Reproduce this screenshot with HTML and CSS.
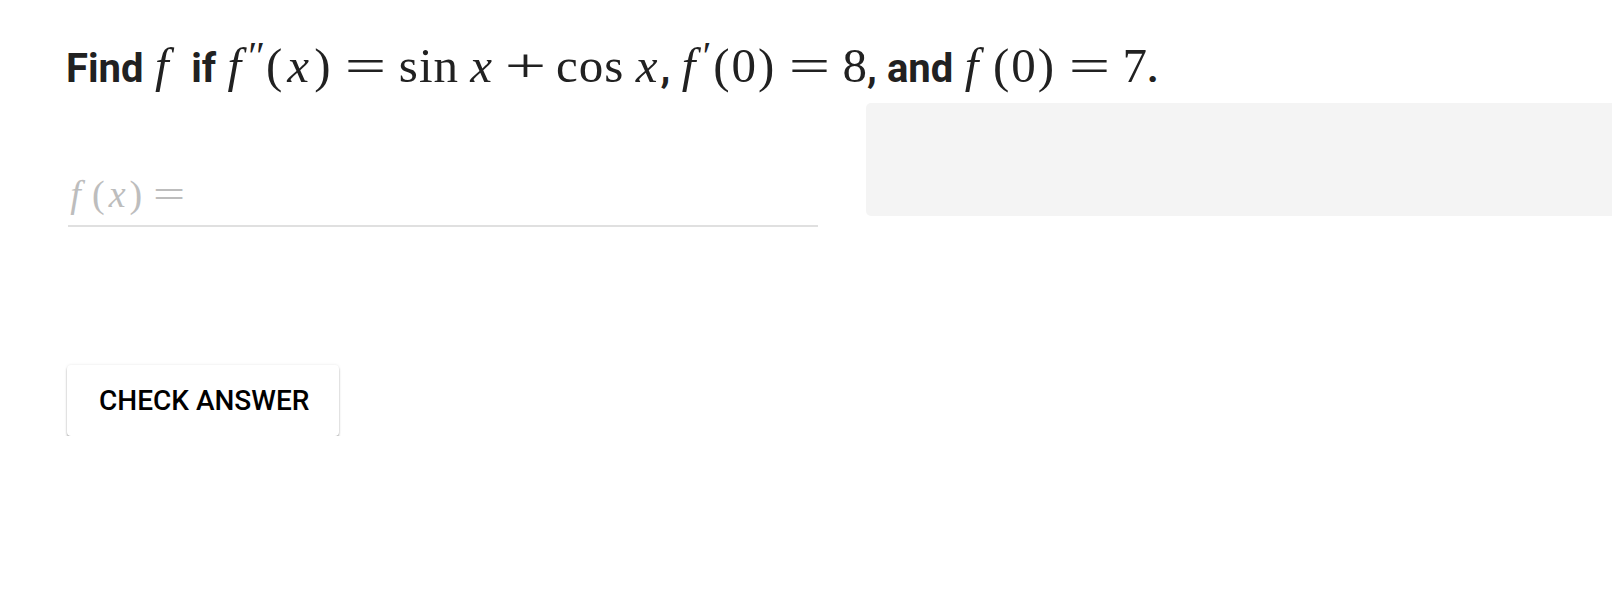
FILE: index.html
```html
<!DOCTYPE html>
<html lang="en">
<head>
<meta charset="utf-8">
<title>Question</title>
<link rel="stylesheet" href="styles.css">
</head>
<body>
<div class="page">
  <p class="question">Find <span class="m"><i class="v f">f</i></span> if <span class="m"><i class="v f">f</i><span class="pr pr2">′′</span><span class="p">(</span><i class="v x">x</i><span class="p">)</span><span class="op rel">=</span><span class="fn">sin</span><span class="th"></span><i class="v x">x</i><span class="op bin">+</span><span class="fn">cos</span><span class="th"></span><i class="v x">x</i></span>, <span class="m"><i class="v f">f</i><span class="pr">′</span><span class="p">(</span>0<span class="p">)</span><span class="op rel">=</span>8</span>, and <span class="m"><i class="v f">f</i><span class="p">(</span>0<span class="p">)</span><span class="op rel">=</span>7</span>.</p>
  <div class="row">
    <div class="answer">
      <div class="field"><span class="ph m"><i class="v f">f</i><span class="p">(</span><i class="v x">x</i><span class="p">)</span><span class="op rel">=</span></span></div>
    </div>
    <div class="preview"></div>
  </div>
  <button class="check" type="button">CHECK ANSWER</button>
</div>
</body>
</html>
```
FILE: styles.css
```css
html, body {
  margin: 0;
  padding: 0;
  overflow: hidden;
  background: #ffffff;
}
body {
  font-family: Roboto, "Liberation Sans", sans-serif;
  color: #212121;
}
.page {
  padding: 41px 0 0 66px;
}
.question {
  margin: 0;
  font-size: 40px;
  font-weight: 700;
  line-height: 1;
  white-space: nowrap;
  color: #212121;
}
.m {
  font-family: "Liberation Serif", "DejaVu Serif", serif;
  font-weight: 400;
  font-size: 49px;
  line-height: 1;
}
.v {
  font-style: italic;
}
.f {
  padding-left: 0.03em;
  padding-right: 0.26em;
}
.x {
  padding-left: 0.064em;
  padding-right: 0.064em;
}
.p {
  padding: 0 0.04em;
}
.fn {
  letter-spacing: 0.02em;
}
.pr {
  font-size: 0.8em;
  vertical-align: 0.32em;
  line-height: 0;
  margin-left: -0.14em;
  margin-right: 0;
}
.pr2 {
  letter-spacing: -0.02em;
}
.op {
  display: inline-block;
  width: 0.8em;
  text-align: center;
}
.rel {
  margin: 0 0.278em;
  transform: scaleX(1.5);
}
.bin {
  margin: 0 0.222em;
  transform: scaleX(1.5);
}
.th {
  display: inline-block;
  width: 0.167em;
}
.row {
  display: flex;
  gap: 48px;
  margin-top: 13px;
  align-items: flex-start;
  margin-left: 2px;
}
.answer {
  width: 750px;
  flex-shrink: 0;
}
.field {
  height: 122px;
  border-bottom: 2px solid #e0e0e0;
  display: flex;
  align-items: flex-end;
  padding-left: 1px;
}
.ph {
  font-size: 38px;
  color: #bdbdbd;
  padding-bottom: 12px;
  line-height: 1;
  white-space: nowrap;
}
.preview {
  width: 800px;
  height: 113px;
  flex-shrink: 0;
  background: #f4f4f4;
  border-radius: 5px;
}
.check {
  display: flex;
  align-items: center;
  margin-top: 138px;
  margin-left: 1px;
  width: 272px;
  height: 71px;
  padding: 0 0 0 32px;
  border: none;
  border-radius: 4px;
  background: #ffffff;
  font-family: Roboto, "Liberation Sans", sans-serif;
  font-size: 28px;
  font-weight: 500;
  color: #000000;
  box-shadow: 0 2px 2px rgba(0,0,0,0.3), 0 0 3px rgba(0,0,0,0.1);
  cursor: pointer;
}
```
